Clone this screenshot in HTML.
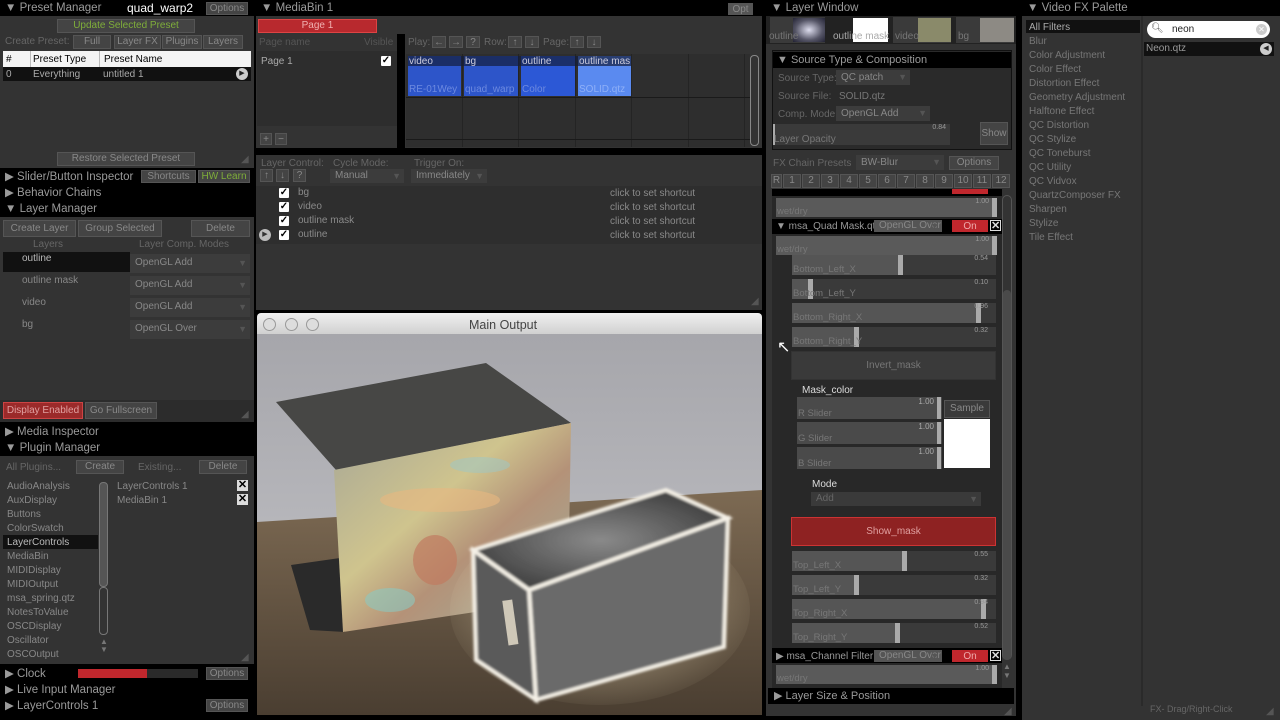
<!DOCTYPE html>
<html><head><meta charset="utf-8"><style>
*{margin:0;padding:0;box-sizing:border-box}
body{width:1280px;height:720px;background:#000;position:relative;overflow:hidden;font-family:"Liberation Sans",sans-serif;font-size:10px;color:#8a8a8a}
div,span{position:absolute}
.hd{height:16px;font-size:11.5px;color:#9a9a9a;line-height:16px;background:#000;white-space:nowrap}
.p{background:#333}
.b{background:#444;border:1px solid #555;color:#888;text-align:center;line-height:12px;font-size:10px;white-space:nowrap;overflow:hidden}
.t{white-space:nowrap;line-height:12px}
.cb{background:#3c3c3c;color:#888;font-size:10px;line-height:18px;padding-left:5px}
.cb:after{content:"▼";position:absolute;right:3px;top:0;color:#555;font-size:9px}
.sl{background:#3a3a3a;overflow:hidden}
.sl i{position:absolute;left:0;top:0;bottom:0;background:#555}
.sl b{position:absolute;top:0;bottom:0;width:5px;background:#aaa}
.sl em{position:absolute;left:1px;bottom:0;font-style:normal;font-size:9.5px;color:#777;line-height:11px}
.sl s{position:absolute;right:8px;top:0;text-decoration:none;font-size:7px;color:#999}
.chk{width:10px;height:10px;background:#fff;border-radius:1px;color:#000;font-size:10px;line-height:10px;text-align:center;font-weight:bold}
.x{width:11px;height:11px;background:#ddd;color:#000;font-size:11px;line-height:11px;text-align:center;font-weight:bold}
</style></head><body>

<!-- LEFT COLUMN -->
<div class="hd" style="left:0;top:0;width:254px;padding-left:5px">▼ Preset Manager</div>
<div class="t" style="left:127px;top:2px;color:#fff;font-size:12px">quad_warp2</div>
<div class="b" style="left:206px;top:2px;width:42px;height:13px">Options</div>
<div class="p" style="left:0;top:16px;width:254px;height:152px"></div>
<div class="b" style="left:57px;top:19px;width:138px;height:14px;color:#7fae3a">Update Selected Preset</div>
<div class="t" style="left:5px;top:36px;color:#666">Create Preset:</div>
<div class="b" style="left:73px;top:35px;width:38px;height:14px">Full</div>
<div class="b" style="left:114px;top:35px;width:47px;height:14px">Layer FX</div>
<div class="b" style="left:162px;top:35px;width:40px;height:14px">Plugins</div>
<div class="b" style="left:203px;top:35px;width:40px;height:14px">Layers</div>
<div style="left:3px;top:51px;width:248px;height:16px;background:#f4f4f4"></div>
<div class="t" style="left:6px;top:54px;color:#000">#</div>
<div style="left:30px;top:51px;width:1px;height:16px;background:#bbb"></div>
<div class="t" style="left:33px;top:54px;color:#000">Preset Type</div>
<div style="left:99px;top:51px;width:1px;height:16px;background:#bbb"></div>
<div class="t" style="left:104px;top:54px;color:#000">Preset Name</div>
<div style="left:3px;top:67px;width:248px;height:14px;background:#111"></div>
<div class="t" style="left:6px;top:69px;color:#aaa">0</div>
<div class="t" style="left:33px;top:69px;color:#aaa">Everything</div>
<div class="t" style="left:103px;top:69px;color:#aaa">untitled 1</div>
<div style="left:236px;top:68px;width:12px;height:12px;border-radius:6px;background:#ccc;color:#222;font-size:7px;line-height:12px;text-align:center">▶</div>
<div class="b" style="left:57px;top:152px;width:138px;height:14px">Restore Selected Preset</div>
<div class="t" style="left:241px;top:154px;color:#555">◢</div>

<div class="hd" style="left:0;top:169px;width:254px;padding-left:5px">▶ Slider/Button Inspector</div>
<div class="b" style="left:141px;top:170px;width:55px;height:13px">Shortcuts</div>
<div class="b" style="left:198px;top:170px;width:52px;height:13px;color:#7fae3a">HW Learn</div>
<div class="hd" style="left:0;top:185px;width:254px;padding-left:5px">▶ Behavior Chains</div>
<div class="hd" style="left:0;top:201px;width:254px;padding-left:5px">▼ Layer Manager</div>
<div class="p" style="left:0;top:217px;width:254px;height:205px"></div>
<div class="b" style="left:3px;top:220px;width:73px;height:17px;line-height:15px">Create Layer</div>
<div class="b" style="left:78px;top:220px;width:84px;height:17px;line-height:15px">Group Selected</div>
<div class="b" style="left:191px;top:220px;width:59px;height:17px;line-height:15px">Delete</div>
<div class="t" style="left:33px;top:239px;color:#666">Layers</div>
<div class="t" style="left:139px;top:239px;color:#666">Layer Comp. Modes</div>
<div style="left:3px;top:252px;width:127px;height:20px;background:#111"></div>
<div class="t" style="left:22px;top:253px;color:#bbb">outline</div>
<div class="t" style="left:22px;top:275px;color:#888">outline mask</div>
<div class="t" style="left:22px;top:297px;color:#888">video</div>
<div class="t" style="left:22px;top:319px;color:#888">bg</div>
<div class="cb" style="left:130px;top:254px;width:120px;height:19px">OpenGL Add</div>
<div class="cb" style="left:130px;top:276px;width:120px;height:19px">OpenGL Add</div>
<div class="cb" style="left:130px;top:298px;width:120px;height:19px">OpenGL Add</div>
<div class="cb" style="left:130px;top:320px;width:120px;height:19px">OpenGL Over</div>
<div style="left:0;top:400px;width:254px;height:22px;background:#2c2c2c"></div>
<div class="b" style="left:3px;top:402px;width:80px;height:17px;line-height:15px;background:#9b2a2a;border-color:#c44;color:#e0a0a0">Display Enabled</div>
<div class="b" style="left:85px;top:402px;width:72px;height:17px;line-height:15px">Go Fullscreen</div>
<div class="t" style="left:241px;top:409px;color:#555">◢</div>

<div class="hd" style="left:0;top:424px;width:258px;padding-left:5px">▶ Media Inspector</div>
<div class="hd" style="left:0;top:440px;width:254px;padding-left:5px">▼ Plugin Manager</div>
<div class="p" style="left:0;top:456px;width:254px;height:208px"></div>
<div class="t" style="left:6px;top:462px;color:#666">All Plugins...</div>
<div class="b" style="left:76px;top:460px;width:48px;height:14px">Create</div>
<div class="t" style="left:138px;top:462px;color:#666">Existing...</div>
<div class="b" style="left:199px;top:460px;width:48px;height:14px">Delete</div>
<div style="left:3px;top:535px;width:95px;height:14px;background:#111"></div>
<div class="t" style="left:7px;top:480px;color:#888;line-height:14px">AudioAnalysis<br>AuxDisplay<br>Buttons<br>ColorSwatch<br><span style="position:static;color:#bbb">LayerControls</span><br>MediaBin<br>MIDIDisplay<br>MIDIOutput<br>msa_spring.qtz<br>NotesToValue<br>OSCDisplay<br>Oscillator<br>OSCOutput</div>
<div style="left:99px;top:482px;width:9px;height:105px;border:1px solid #777;border-radius:4px;background:#555"></div>
<div style="left:99px;top:587px;width:9px;height:48px;border:1px solid #777;border-radius:4px"></div>
<div class="t" style="left:100px;top:638px;color:#777;font-size:8px;line-height:8px">▲<br>▼</div>
<div class="t" style="left:117px;top:480px;color:#888;line-height:14px">LayerControls 1<br>MediaBin 1</div>
<div class="x" style="left:237px;top:480px">✕</div>
<div class="x" style="left:237px;top:494px">✕</div>
<div class="t" style="left:241px;top:652px;color:#555">◢</div>
<div class="hd" style="left:0;top:666px;width:254px;padding-left:5px">▶ Clock</div>
<div style="left:78px;top:669px;width:120px;height:9px;background:#2a2a2a"></div>
<div style="left:78px;top:669px;width:69px;height:9px;background:#c0272d"></div>
<div class="b" style="left:206px;top:667px;width:42px;height:13px">Options</div>
<div class="hd" style="left:0;top:682px;width:254px;padding-left:5px">▶ Live Input Manager</div>
<div class="hd" style="left:0;top:698px;width:254px;padding-left:5px">▶ LayerControls 1</div>
<div class="b" style="left:206px;top:699px;width:42px;height:13px">Options</div>

<!-- MIDDLE COLUMN -->
<div class="hd" style="left:256px;top:0;width:506px;padding-left:5px">▼ MediaBin 1</div>
<div class="b" style="left:728px;top:3px;width:25px;height:12px;background:#555">Opt</div>
<div class="p" style="left:256px;top:16px;width:506px;height:134px"></div>
<div class="b" style="left:258px;top:19px;width:119px;height:14px;background:#b8292e;border-color:#d44;color:#f0b0b0">Page 1</div>
<div class="t" style="left:259px;top:37px;color:#555">Page name</div>
<div class="t" style="left:364px;top:37px;color:#555">Visible</div>
<div style="left:257px;top:51px;width:140px;height:75px;background:#2d2d2d"></div>
<div class="t" style="left:261px;top:56px;color:#aaa">Page 1</div>
<div class="chk" style="left:381px;top:56px">✓</div>
<div class="b" style="left:260px;top:133px;width:12px;height:12px">+</div>
<div class="b" style="left:275px;top:133px;width:12px;height:12px">−</div>
<div style="left:397px;top:34px;width:8px;height:120px;background:#000"></div>
<div style="left:256px;top:148px;width:506px;height:7px;background:#000"></div>
<div class="t" style="left:408px;top:37px;color:#666">Play:</div>
<div class="b" style="left:432px;top:36px;width:14px;height:12px">←</div>
<div class="b" style="left:449px;top:36px;width:14px;height:12px">→</div>
<div class="b" style="left:466px;top:36px;width:14px;height:12px">?</div>
<div class="t" style="left:484px;top:37px;color:#666">Row:</div>
<div class="b" style="left:508px;top:36px;width:14px;height:12px">↑</div>
<div class="b" style="left:525px;top:36px;width:14px;height:12px">↓</div>
<div class="t" style="left:543px;top:37px;color:#666">Page:</div>
<div class="b" style="left:570px;top:36px;width:14px;height:12px">↑</div>
<div class="b" style="left:587px;top:36px;width:14px;height:12px">↓</div>
<div style="left:406px;top:54px;width:344px;height:93px;background:#2e2e2e;background-image:linear-gradient(90deg,transparent 56px,#1a1a1a 56px,#1a1a1a 57px,transparent 57px);background-size:56.5px 100%"></div>
<div style="left:406px;top:97px;width:344px;height:1px;background:#1a1a1a"></div>
<div style="left:406px;top:139px;width:344px;height:1px;background:#1a1a1a"></div>
<div style="left:408px;top:56px;width:53px;height:40px;background:#2d55c9"></div>
<div style="left:464px;top:56px;width:54px;height:40px;background:#2d55c9"></div>
<div style="left:521px;top:56px;width:54px;height:40px;background:#2c58d6"></div>
<div style="left:578px;top:56px;width:53px;height:40px;background:#5a8af0"></div>
<div style="left:408px;top:56px;width:223px;height:10px;background:rgba(20,30,60,.7)"></div>
<div class="t" style="left:409px;top:56px;color:#ccd">video</div>
<div class="t" style="left:465px;top:56px;color:#ccd">bg</div>
<div class="t" style="left:522px;top:56px;color:#ccd">outline</div>
<div class="t" style="left:579px;top:56px;color:#ccd">outline mas</div>
<div class="t" style="left:409px;top:84px;color:#6d8ae0">RE-01Wey</div>
<div class="t" style="left:465px;top:84px;color:#6d8ae0">quad_warp</div>
<div class="t" style="left:522px;top:84px;color:#6d8ae0">Color</div>
<div class="t" style="left:579px;top:84px;color:#8fb0f8">SOLID.qtz</div>
<div style="left:750px;top:55px;width:9px;height:91px;border:1px solid #888;border-radius:4px"></div>
<div class="p" style="left:256px;top:155px;width:506px;height:155px"></div>
<div class="t" style="left:261px;top:158px;color:#666">Layer Control:</div>
<div class="t" style="left:333px;top:158px;color:#666">Cycle Mode:</div>
<div class="t" style="left:414px;top:158px;color:#666">Trigger On:</div>
<div class="b" style="left:260px;top:169px;width:13px;height:13px">↑</div>
<div class="b" style="left:276px;top:169px;width:13px;height:13px">↓</div>
<div class="b" style="left:293px;top:169px;width:13px;height:13px">?</div>
<div class="cb" style="left:330px;top:169px;width:74px;height:14px;line-height:14px">Manual</div>
<div class="cb" style="left:411px;top:169px;width:76px;height:14px;line-height:14px">Immediately</div>
<div style="left:256px;top:186px;width:506px;height:58px;background:#2e2e2e"></div>
<div class="chk" style="left:279px;top:188px">✓</div><div class="t" style="left:298px;top:187px">bg</div>
<div class="chk" style="left:279px;top:202px">✓</div><div class="t" style="left:298px;top:201px">video</div>
<div class="chk" style="left:279px;top:216px">✓</div><div class="t" style="left:298px;top:215px">outline mask</div>
<div class="chk" style="left:279px;top:230px">✓</div><div class="t" style="left:298px;top:229px">outline</div>
<div style="left:259px;top:229px;width:12px;height:12px;border-radius:6px;background:#bbb;color:#333;font-size:7px;line-height:12px;text-align:center">▶</div>
<div class="t" style="left:610px;top:187px;line-height:14px">click to set shortcut<br>click to set shortcut<br>click to set shortcut<br>click to set shortcut</div>
<div class="t" style="left:751px;top:296px;color:#555">◢</div>

<!-- Main Output -->
<div style="left:257px;top:313px;width:505px;height:21px;background:linear-gradient(#f0f0f0,#d0d0d0);border-radius:4px 4px 0 0"></div>
<div style="left:263px;top:318px;width:13px;height:13px;border-radius:7px;background:#ddd;border:1px solid #999"></div>
<div style="left:285px;top:318px;width:13px;height:13px;border-radius:7px;background:#ddd;border:1px solid #999"></div>
<div style="left:306px;top:318px;width:13px;height:13px;border-radius:7px;background:#ddd;border:1px solid #999"></div>
<div class="t" style="left:469px;top:318px;color:#444;font-size:12.5px;line-height:14px">Main Output</div>
<svg style="position:absolute;left:257px;top:334px" width="505" height="381" viewBox="257 334 505 381">
<defs>
<linearGradient id="wall" x1="0" y1="0" x2="0" y2="1"><stop offset="0" stop-color="#a6a6ab"/><stop offset="1" stop-color="#c6c6ca"/></linearGradient>
<linearGradient id="tab" x1="0" y1="0" x2="0" y2="1"><stop offset="0" stop-color="#7d6a53"/><stop offset="1" stop-color="#4a3e31"/></linearGradient>
<linearGradient id="vid" x1="0" y1="0" x2="1" y2="1"><stop offset="0" stop-color="#a7a796"/><stop offset=".4" stop-color="#cfc48e"/><stop offset=".6" stop-color="#b49278"/><stop offset="1" stop-color="#9fb3a0"/></linearGradient>
<radialGradient id="glow" cx=".5" cy=".5" r=".55"><stop offset="0" stop-color="#fff0c8" stop-opacity=".55"/><stop offset="1" stop-color="#fff0c8" stop-opacity="0"/></radialGradient>
<radialGradient id="face" cx=".5" cy=".5" r=".6"><stop offset="0" stop-color="#8a8a8a"/><stop offset="1" stop-color="#3a3a3a"/></radialGradient>
<filter id="bl"><feGaussianBlur stdDeviation="1.2"/></filter>
</defs>
<rect x="257" y="334" width="505" height="381" fill="url(#wall)"/>
<polygon points="257,522 762,490 762,715 257,715" fill="url(#tab)"/>
<polygon points="291,565 340,558 345,632 310,630" fill="#2a2a2a"/>
<polygon points="276,402 486,363 571,423 336,470" fill="#474745"/>
<polygon points="334,470 571,423 568,598 343,632" fill="url(#vid)"/>
<ellipse cx="440" cy="500" rx="60" ry="12" fill="#e8b880" opacity=".6"/>
<ellipse cx="435" cy="560" rx="22" ry="25" fill="#c07a60" opacity=".7"/>
<ellipse cx="390" cy="600" rx="25" ry="12" fill="#8cc8c0" opacity=".6"/>
<ellipse cx="480" cy="465" rx="30" ry="8" fill="#9cc8c8" opacity=".5"/>
<ellipse cx="600" cy="610" rx="150" ry="95" fill="url(#glow)"/>
<g filter="url(#bl)">
<polygon points="473,550 666,490 728,518 529,590" fill="url(#face)" stroke="#f4f0e6" stroke-width="4"/>
<polygon points="529,590 728,518 724,647 536,700" fill="#6a6a6a" stroke="#f4f0e6" stroke-width="4"/>
<polygon points="473,550 529,590 536,700 476,660" fill="#5a5a5a" stroke="#f4f0e6" stroke-width="4"/>
</g>
<rect x="505" y="600" width="10" height="45" fill="#cfc8b8" transform="rotate(-8 510 620)"/>
</svg>

<!-- LAYER WINDOW -->
<div class="hd" style="left:766px;top:0;width:252px;padding-left:5px">▼ Layer Window</div>
<div style="left:766px;top:16px;width:250px;height:28px;background:#222"></div>
<div style="left:770px;top:17px;width:55px;height:26px;background:#3a3a3a"></div>
<div style="left:793px;top:18px;width:32px;height:24px;background:radial-gradient(#dde,#556 60%,#223)"></div>
<div class="t" style="left:769px;top:31px;color:#777">outline</div>
<div style="left:853px;top:18px;width:35px;height:24px;background:#fff"></div>
<div class="t" style="left:833px;top:31px;color:#aaa">outline mask</div>
<div style="left:893px;top:17px;width:58px;height:26px;background:#3a3a3a"></div>
<div style="left:918px;top:18px;width:33px;height:24px;background:#8a8a6a"></div>
<div class="t" style="left:895px;top:31px;color:#777">video</div>
<div style="left:956px;top:17px;width:58px;height:26px;background:#3a3a3a"></div>
<div style="left:980px;top:18px;width:34px;height:24px;background:#8d8a84"></div>
<div class="t" style="left:958px;top:31px;color:#777">bg</div>
<div class="p" style="left:766px;top:44px;width:250px;height:672px"></div>
<div style="left:772px;top:50px;width:240px;height:100px;background:#2a2a2a;border:1px solid #111"></div>
<div class="hd" style="left:773px;top:52px;width:238px;padding-left:4px;font-size:11px">▼ Source Type &amp; Composition</div>
<div class="t" style="left:778px;top:73px;color:#666">Source Type:</div>
<div class="cb" style="left:836px;top:70px;width:74px;height:15px;line-height:15px">QC patch</div>
<div class="t" style="left:778px;top:91px;color:#666">Source File:</div>
<div class="t" style="left:839px;top:91px;color:#777">SOLID.qtz</div>
<div class="t" style="left:778px;top:109px;color:#666">Comp. Mode:</div>
<div class="cb" style="left:836px;top:106px;width:94px;height:15px;line-height:15px">OpenGL Add</div>
<div class="sl" style="left:773px;top:124px;width:177px;height:21px"><b style="left:0;width:2px"></b><em style="font-size:10px">Layer Opacity</em><s style="right:4px">0.84</s></div>
<div class="b" style="left:980px;top:122px;width:28px;height:23px;line-height:21px">Show</div>
<div class="t" style="left:773px;top:158px;color:#666">FX Chain Presets</div>
<div class="cb" style="left:856px;top:155px;width:88px;height:15px;line-height:15px">BW-Blur</div>
<div class="b" style="left:949px;top:156px;width:50px;height:14px">Options</div>
<div class="t" style="left:771px;top:174px;width:240px;display:flex;gap:1px">
<span class="b" style="position:static;width:11px;height:14px">R</span><span class="b" style="position:static;width:18px;height:14px">1</span><span class="b" style="position:static;width:18px;height:14px">2</span><span class="b" style="position:static;width:18px;height:14px">3</span><span class="b" style="position:static;width:18px;height:14px">4</span><span class="b" style="position:static;width:18px;height:14px">5</span><span class="b" style="position:static;width:18px;height:14px">6</span><span class="b" style="position:static;width:18px;height:14px">7</span><span class="b" style="position:static;width:18px;height:14px">8</span><span class="b" style="position:static;width:18px;height:14px">9</span><span class="b" style="position:static;width:18px;height:14px">10</span><span class="b" style="position:static;width:18px;height:14px">11</span><span class="b" style="position:static;width:18px;height:14px">12</span></div>
<div style="left:772px;top:189px;width:230px;height:499px;background:#282828"></div>
<div style="left:772px;top:189px;width:230px;height:7px;background:#000"></div>
<div style="left:952px;top:189px;width:36px;height:5px;background:#c0272d"></div>
<div class="sl" style="left:776px;top:198px;width:221px;height:19px;background:#5a5a5a"><b style="left:216px"></b><em>wet/dry</em><s>1.00</s></div>
<div style="left:772px;top:219px;width:230px;height:15px;background:#000"></div>
<div class="t" style="left:776px;top:221px;color:#999">▼ msa_Quad Mask.qtz</div>
<div class="cb" style="left:874px;top:220px;width:68px;height:12px;line-height:12px;background:#555;color:#888">OpenGL Over</div>
<div class="b" style="left:952px;top:220px;width:36px;height:12px;background:#c0272d;border-color:#c0272d;color:#eaa">On</div>
<div class="x" style="left:990px;top:220px;background:#000;color:#ddd;border:1px solid #ddd">✕</div>
<div class="sl" style="left:776px;top:236px;width:221px;height:19px;background:#5a5a5a"><b style="left:216px"></b><em>wet/dry</em><s>1.00</s></div>
<div class="sl" style="left:792px;top:255px;width:204px;height:20px"><i style="width:110px"></i><b style="left:106px"></b><em>Bottom_Left_X</em><s>0.54</s></div>
<div class="sl" style="left:792px;top:279px;width:204px;height:20px"><i style="width:20px"></i><b style="left:16px"></b><em>Bottom_Left_Y</em><s>0.10</s></div>
<div class="sl" style="left:792px;top:303px;width:204px;height:20px"><i style="width:189px"></i><b style="left:184px"></b><em>Bottom_Right_X</em><s>0.96</s></div>
<div class="sl" style="left:792px;top:327px;width:204px;height:20px"><i style="width:66px"></i><b style="left:62px"></b><em>Bottom_Right_Y</em><s>0.32</s></div>
<div style="left:791px;top:351px;width:205px;height:29px;background:#3a3a3a;border:1px solid #333;text-align:center;line-height:28px;color:#777">Invert_mask</div>
<div class="t" style="left:802px;top:385px;color:#ddd">Mask_color</div>
<div class="sl" style="left:797px;top:397px;width:145px;height:22px;background:#4a4a4a"><b style="left:140px;width:4px"></b><em>R Slider</em><s style="font-size:8px;color:#aaa">1.00</s></div>
<div class="sl" style="left:797px;top:422px;width:145px;height:22px;background:#4a4a4a"><b style="left:140px;width:4px"></b><em>G Slider</em><s style="font-size:8px;color:#aaa">1.00</s></div>
<div class="sl" style="left:797px;top:447px;width:145px;height:22px;background:#4a4a4a"><b style="left:140px;width:4px"></b><em>B Slider</em><s style="font-size:8px;color:#aaa">1.00</s></div>
<div class="b" style="left:944px;top:400px;width:46px;height:18px;line-height:16px;background:#3a3a3a">Sample</div>
<div style="left:944px;top:419px;width:46px;height:49px;background:#fff"></div>
<div class="t" style="left:812px;top:479px;color:#ddd">Mode</div>
<div class="cb" style="left:811px;top:492px;width:170px;height:14px;line-height:14px;background:#3a3a3a;color:#666">Add</div>
<div style="left:791px;top:517px;width:205px;height:29px;background:#8e2222;border:1px solid #c33;text-align:center;line-height:27px;color:#e0a0a0">Show_mask</div>
<div class="sl" style="left:792px;top:551px;width:204px;height:20px"><i style="width:114px"></i><b style="left:110px"></b><em>Top_Left_X</em><s>0.55</s></div>
<div class="sl" style="left:792px;top:575px;width:204px;height:20px"><i style="width:66px"></i><b style="left:62px"></b><em>Top_Left_Y</em><s>0.32</s></div>
<div class="sl" style="left:792px;top:599px;width:204px;height:20px"><i style="width:193px"></i><b style="left:189px"></b><em>Top_Right_X</em><s>0.94</s></div>
<div class="sl" style="left:792px;top:623px;width:204px;height:20px"><i style="width:108px"></i><b style="left:103px"></b><em>Top_Right_Y</em><s>0.52</s></div>
<div style="left:772px;top:648px;width:230px;height:15px;background:#000"></div>
<div class="t" style="left:776px;top:651px;color:#999">▶ msa_Channel Filter</div>
<div class="cb" style="left:874px;top:650px;width:68px;height:12px;line-height:12px;background:#555;color:#888">OpenGL Over</div>
<div class="b" style="left:952px;top:650px;width:36px;height:12px;background:#c0272d;border-color:#c0272d;color:#eaa">On</div>
<div class="x" style="left:990px;top:650px;background:#000;color:#ddd;border:1px solid #ddd">✕</div>
<div class="sl" style="left:776px;top:665px;width:221px;height:19px;background:#5a5a5a"><b style="left:216px"></b><em>wet/dry</em><s>1.00</s></div>
<div style="left:1002px;top:195px;width:10px;height:465px;border:1px solid #555;border-radius:5px"></div>
<div style="left:1003px;top:290px;width:8px;height:370px;background:#4a4a4a;border-radius:4px"></div>
<div class="t" style="left:1003px;top:662px;color:#777;font-size:8px;line-height:9px">▲<br>▼</div>
<div class="hd" style="left:768px;top:688px;width:246px;padding-left:6px;font-size:11px">▶ Layer Size &amp; Position</div>
<div class="t" style="left:1004px;top:706px;color:#555">◢</div>

<!-- VIDEO FX PALETTE -->
<div class="hd" style="left:1022px;top:0;width:258px;padding-left:5px">▼ Video FX Palette</div>
<div class="p" style="left:1022px;top:16px;width:258px;height:704px"></div>
<div style="left:1026px;top:20px;width:114px;height:13px;background:#111"></div>
<div style="left:1141px;top:16px;width:2px;height:690px;background:#2a2a2a"></div>
<div class="t" style="left:1029px;top:21px;color:#aaa;line-height:14px">All Filters</div>
<div class="t" style="left:1029px;top:35px;color:#777;line-height:14px">Blur<br>Color Adjustment<br>Color Effect<br>Distortion Effect<br>Geometry Adjustment<br>Halftone Effect<br>QC Distortion<br>QC Stylize<br>QC Toneburst<br>QC Utility<br>QC Vidvox<br>QuartzComposer FX<br>Sharpen<br>Stylize<br>Tile Effect</div>
<div style="left:1147px;top:21px;width:123px;height:17px;background:#fff;border-radius:9px"></div>
<div class="t" style="left:1151px;top:23px;color:#555;font-size:10px">🔍︎</div>
<div class="t" style="left:1172px;top:24px;color:#222">neon</div>
<div style="left:1256px;top:24px;width:11px;height:11px;border-radius:6px;background:#ccc;color:#fff;font-size:8px;line-height:11px;text-align:center">✕</div>
<div style="left:1144px;top:42px;width:130px;height:14px;background:#111"></div>
<div class="t" style="left:1146px;top:43px;color:#999">Neon.qtz</div>
<div style="left:1260px;top:43px;width:12px;height:12px;border-radius:6px;background:#ccc;color:#222;font-size:7px;line-height:12px;text-align:center">◀</div>
<div class="t" style="left:1150px;top:703px;color:#666;font-size:9px">FX- Drag/Right-Click</div>
<div class="t" style="left:1266px;top:706px;color:#555">◢</div>

<div class="t" style="left:777px;top:342px;color:#fff;font-size:16px">↖</div>
</body></html>
